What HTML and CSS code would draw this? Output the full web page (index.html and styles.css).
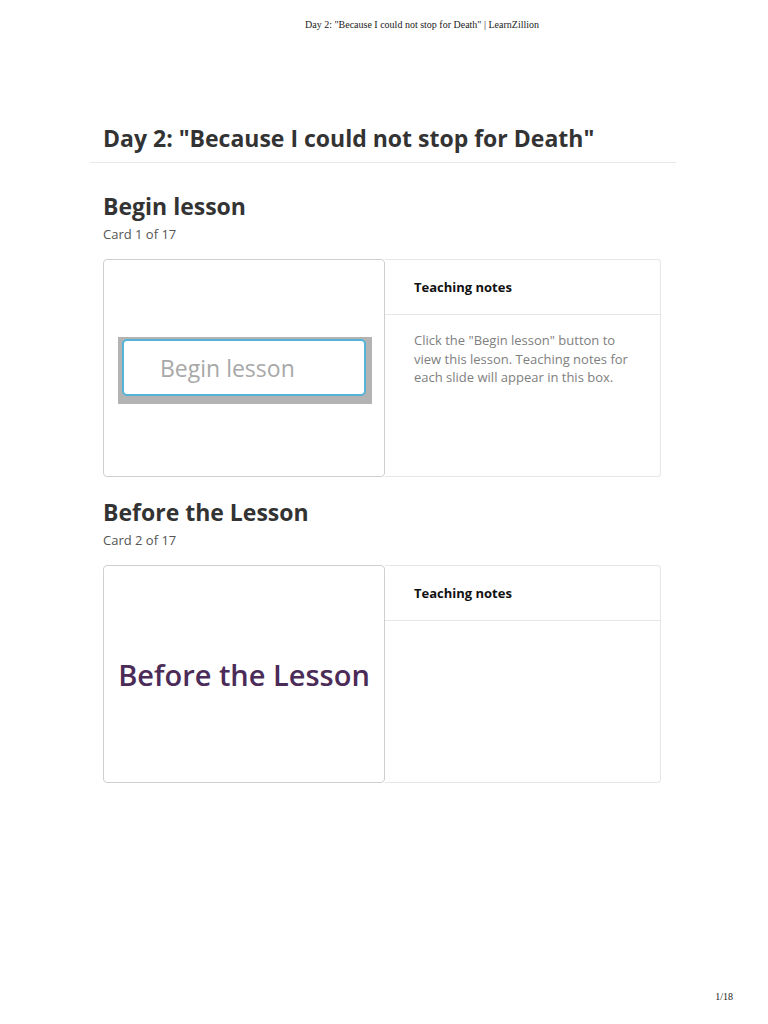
FILE: index.html
```html
<!DOCTYPE html>
<html lang="en">
<head>
<meta charset="utf-8">
<title>Day 2: "Because I could not stop for Death" | LearnZillion</title>
<link rel="stylesheet" href="styles.css">
</head>
<body>
<div class="sheet">
  <header class="print-header">Day 2: "Because I could not stop for Death" | LearnZillion</header>
  <main class="page">
    <div class="title-bar">
      <h1 class="lesson-title">Day 2: "Because I could not stop for Death"</h1>
    </div>

    <section class="card-section first">
      <h2 class="card-title">Begin lesson</h2>
      <div class="card-count">Card 1 of 17</div>
      <div class="card">
        <div class="slide">
          <div class="begin-shadow">
            <div class="begin-btn">Begin lesson</div>
          </div>
        </div>
        <div class="notes">
          <div class="notes-head">Teaching notes</div>
          <div class="notes-body">Click the "Begin lesson" button to view this lesson. Teaching notes for each slide will appear in this box.</div>
        </div>
      </div>
    </section>

    <section class="card-section">
      <h2 class="card-title">Before the Lesson</h2>
      <div class="card-count">Card 2 of 17</div>
      <div class="card">
        <div class="slide">
          <div class="slide-heading">Before the Lesson</div>
        </div>
        <div class="notes">
          <div class="notes-head">Teaching notes</div>
          <div class="notes-body"></div>
        </div>
      </div>
    </section>
  </main>
  <footer class="print-footer">1/18</footer>
</div>
</body>
</html>
```

FILE: styles.css
```css
html, body {
  margin: 0;
  padding: 0;
  background: #ffffff;
}

.sheet {
  min-height: 1024px;
  display: flex;
  flex-direction: column;
  font-family: "Open Sans", "Noto Sans", sans-serif;
  color: #333333;
}

.print-header {
  height: 48px;
  display: flex;
  align-items: center;
  justify-content: center;
  padding-left: 76px;
  font-family: "Liberation Serif", serif;
  font-size: 10px;
  color: #222222;
}

.page {
  margin-left: 90px;
  width: 586px;
}

.title-bar {
  margin-top: 75px;
  padding: 0 13px 9px;
  border-bottom: 1px solid #e8e8e8;
}

.lesson-title {
  margin: 0;
  font-size: 23px;
  line-height: 30px;
  font-weight: 700;
  color: #333333;
}

.card-section {
  padding-left: 13px;
  width: 558px;
  margin-top: 20px;
}

.card-section.first {
  margin-top: 28px;
}

.card-title {
  margin: 0;
  font-size: 23px;
  line-height: 30px;
  font-weight: 700;
  color: #333333;
}

.card-count {
  margin-top: 4px;
  font-size: 13px;
  line-height: 18px;
  color: #555555;
}

.card {
  margin-top: 16px;
  display: flex;
  height: 218px;
}

.slide {
  width: 282px;
  box-sizing: border-box;
  border: 1px solid #cfcfcf;
  border-radius: 4px;
  display: flex;
  align-items: center;
  justify-content: center;
  position: relative;
  z-index: 1;
  background: #ffffff;
}

.begin-shadow {
  background: #b3b3b3;
  padding: 2px 6px 8px 4px;
  width: 254px;
  box-sizing: border-box;
  margin-top: 5px;
  margin-left: 2px;
}

.begin-btn {
  background: #ffffff;
  border: 2px solid #55b3d9;
  border-radius: 5px;
  height: 57px;
  box-sizing: border-box;
  display: flex;
  align-items: center;
  padding-left: 36px;
  font-size: 23px;
  color: #a8a8a8;
}

.slide-heading {
  font-size: 29px;
  font-weight: 600;
  color: #4b2b57;
}

.notes {
  flex: 1;
  box-sizing: border-box;
  border: 1px solid #e6e6e6;
  border-left: none;
  border-radius: 0 4px 4px 0;
  display: flex;
  flex-direction: column;
}

.notes-head {
  height: 55px;
  box-sizing: border-box;
  border-bottom: 1px solid #e6e6e6;
  display: flex;
  align-items: center;
  padding-left: 29px;
  font-size: 13px;
  font-weight: 700;
  color: #111111;
}

.notes-body {
  padding: 16px 29px 0;
  font-size: 13px;
  line-height: 18.5px;
  color: #808080;
}

.print-footer {
  margin-top: auto;
  height: 27px;
  box-sizing: border-box;
  padding: 0 35px 0 0;
  text-align: right;
  font-family: "Liberation Serif", serif;
  font-size: 10px;
  line-height: 0;
  color: #222222;
}
```
